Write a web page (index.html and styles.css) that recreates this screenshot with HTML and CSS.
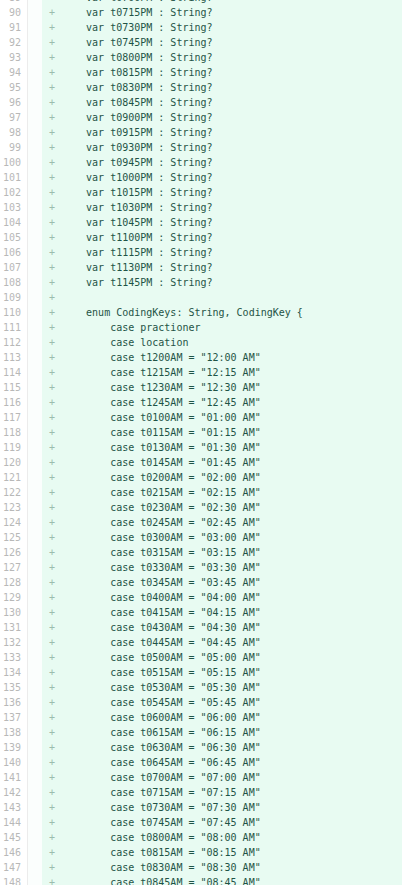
FILE: index.html
```html
<!DOCTYPE html>
<html>
<head>
<meta charset="utf-8">
<link rel="stylesheet" href="styles.css">
</head>
<body>
<div class="diff">
<div class="row"><span class="num">89</span><span class="gap"></span><span class="code"><span class="plus">+</span><span class="src">    var t0700PM : String?</span></span></div>
<div class="row"><span class="num">90</span><span class="gap"></span><span class="code"><span class="plus">+</span><span class="src">    var t0715PM : String?</span></span></div>
<div class="row"><span class="num">91</span><span class="gap"></span><span class="code"><span class="plus">+</span><span class="src">    var t0730PM : String?</span></span></div>
<div class="row"><span class="num">92</span><span class="gap"></span><span class="code"><span class="plus">+</span><span class="src">    var t0745PM : String?</span></span></div>
<div class="row"><span class="num">93</span><span class="gap"></span><span class="code"><span class="plus">+</span><span class="src">    var t0800PM : String?</span></span></div>
<div class="row"><span class="num">94</span><span class="gap"></span><span class="code"><span class="plus">+</span><span class="src">    var t0815PM : String?</span></span></div>
<div class="row"><span class="num">95</span><span class="gap"></span><span class="code"><span class="plus">+</span><span class="src">    var t0830PM : String?</span></span></div>
<div class="row"><span class="num">96</span><span class="gap"></span><span class="code"><span class="plus">+</span><span class="src">    var t0845PM : String?</span></span></div>
<div class="row"><span class="num">97</span><span class="gap"></span><span class="code"><span class="plus">+</span><span class="src">    var t0900PM : String?</span></span></div>
<div class="row"><span class="num">98</span><span class="gap"></span><span class="code"><span class="plus">+</span><span class="src">    var t0915PM : String?</span></span></div>
<div class="row"><span class="num">99</span><span class="gap"></span><span class="code"><span class="plus">+</span><span class="src">    var t0930PM : String?</span></span></div>
<div class="row"><span class="num">100</span><span class="gap"></span><span class="code"><span class="plus">+</span><span class="src">    var t0945PM : String?</span></span></div>
<div class="row"><span class="num">101</span><span class="gap"></span><span class="code"><span class="plus">+</span><span class="src">    var t1000PM : String?</span></span></div>
<div class="row"><span class="num">102</span><span class="gap"></span><span class="code"><span class="plus">+</span><span class="src">    var t1015PM : String?</span></span></div>
<div class="row"><span class="num">103</span><span class="gap"></span><span class="code"><span class="plus">+</span><span class="src">    var t1030PM : String?</span></span></div>
<div class="row"><span class="num">104</span><span class="gap"></span><span class="code"><span class="plus">+</span><span class="src">    var t1045PM : String?</span></span></div>
<div class="row"><span class="num">105</span><span class="gap"></span><span class="code"><span class="plus">+</span><span class="src">    var t1100PM : String?</span></span></div>
<div class="row"><span class="num">106</span><span class="gap"></span><span class="code"><span class="plus">+</span><span class="src">    var t1115PM : String?</span></span></div>
<div class="row"><span class="num">107</span><span class="gap"></span><span class="code"><span class="plus">+</span><span class="src">    var t1130PM : String?</span></span></div>
<div class="row"><span class="num">108</span><span class="gap"></span><span class="code"><span class="plus">+</span><span class="src">    var t1145PM : String?</span></span></div>
<div class="row"><span class="num">109</span><span class="gap"></span><span class="code"><span class="plus">+</span><span class="src"></span></span></div>
<div class="row"><span class="num">110</span><span class="gap"></span><span class="code"><span class="plus">+</span><span class="src">    enum CodingKeys: String, CodingKey {</span></span></div>
<div class="row"><span class="num">111</span><span class="gap"></span><span class="code"><span class="plus">+</span><span class="src">        case practioner</span></span></div>
<div class="row"><span class="num">112</span><span class="gap"></span><span class="code"><span class="plus">+</span><span class="src">        case location</span></span></div>
<div class="row"><span class="num">113</span><span class="gap"></span><span class="code"><span class="plus">+</span><span class="src">        case t1200AM = "12:00 AM"</span></span></div>
<div class="row"><span class="num">114</span><span class="gap"></span><span class="code"><span class="plus">+</span><span class="src">        case t1215AM = "12:15 AM"</span></span></div>
<div class="row"><span class="num">115</span><span class="gap"></span><span class="code"><span class="plus">+</span><span class="src">        case t1230AM = "12:30 AM"</span></span></div>
<div class="row"><span class="num">116</span><span class="gap"></span><span class="code"><span class="plus">+</span><span class="src">        case t1245AM = "12:45 AM"</span></span></div>
<div class="row"><span class="num">117</span><span class="gap"></span><span class="code"><span class="plus">+</span><span class="src">        case t0100AM = "01:00 AM"</span></span></div>
<div class="row"><span class="num">118</span><span class="gap"></span><span class="code"><span class="plus">+</span><span class="src">        case t0115AM = "01:15 AM"</span></span></div>
<div class="row"><span class="num">119</span><span class="gap"></span><span class="code"><span class="plus">+</span><span class="src">        case t0130AM = "01:30 AM"</span></span></div>
<div class="row"><span class="num">120</span><span class="gap"></span><span class="code"><span class="plus">+</span><span class="src">        case t0145AM = "01:45 AM"</span></span></div>
<div class="row"><span class="num">121</span><span class="gap"></span><span class="code"><span class="plus">+</span><span class="src">        case t0200AM = "02:00 AM"</span></span></div>
<div class="row"><span class="num">122</span><span class="gap"></span><span class="code"><span class="plus">+</span><span class="src">        case t0215AM = "02:15 AM"</span></span></div>
<div class="row"><span class="num">123</span><span class="gap"></span><span class="code"><span class="plus">+</span><span class="src">        case t0230AM = "02:30 AM"</span></span></div>
<div class="row"><span class="num">124</span><span class="gap"></span><span class="code"><span class="plus">+</span><span class="src">        case t0245AM = "02:45 AM"</span></span></div>
<div class="row"><span class="num">125</span><span class="gap"></span><span class="code"><span class="plus">+</span><span class="src">        case t0300AM = "03:00 AM"</span></span></div>
<div class="row"><span class="num">126</span><span class="gap"></span><span class="code"><span class="plus">+</span><span class="src">        case t0315AM = "03:15 AM"</span></span></div>
<div class="row"><span class="num">127</span><span class="gap"></span><span class="code"><span class="plus">+</span><span class="src">        case t0330AM = "03:30 AM"</span></span></div>
<div class="row"><span class="num">128</span><span class="gap"></span><span class="code"><span class="plus">+</span><span class="src">        case t0345AM = "03:45 AM"</span></span></div>
<div class="row"><span class="num">129</span><span class="gap"></span><span class="code"><span class="plus">+</span><span class="src">        case t0400AM = "04:00 AM"</span></span></div>
<div class="row"><span class="num">130</span><span class="gap"></span><span class="code"><span class="plus">+</span><span class="src">        case t0415AM = "04:15 AM"</span></span></div>
<div class="row"><span class="num">131</span><span class="gap"></span><span class="code"><span class="plus">+</span><span class="src">        case t0430AM = "04:30 AM"</span></span></div>
<div class="row"><span class="num">132</span><span class="gap"></span><span class="code"><span class="plus">+</span><span class="src">        case t0445AM = "04:45 AM"</span></span></div>
<div class="row"><span class="num">133</span><span class="gap"></span><span class="code"><span class="plus">+</span><span class="src">        case t0500AM = "05:00 AM"</span></span></div>
<div class="row"><span class="num">134</span><span class="gap"></span><span class="code"><span class="plus">+</span><span class="src">        case t0515AM = "05:15 AM"</span></span></div>
<div class="row"><span class="num">135</span><span class="gap"></span><span class="code"><span class="plus">+</span><span class="src">        case t0530AM = "05:30 AM"</span></span></div>
<div class="row"><span class="num">136</span><span class="gap"></span><span class="code"><span class="plus">+</span><span class="src">        case t0545AM = "05:45 AM"</span></span></div>
<div class="row"><span class="num">137</span><span class="gap"></span><span class="code"><span class="plus">+</span><span class="src">        case t0600AM = "06:00 AM"</span></span></div>
<div class="row"><span class="num">138</span><span class="gap"></span><span class="code"><span class="plus">+</span><span class="src">        case t0615AM = "06:15 AM"</span></span></div>
<div class="row"><span class="num">139</span><span class="gap"></span><span class="code"><span class="plus">+</span><span class="src">        case t0630AM = "06:30 AM"</span></span></div>
<div class="row"><span class="num">140</span><span class="gap"></span><span class="code"><span class="plus">+</span><span class="src">        case t0645AM = "06:45 AM"</span></span></div>
<div class="row"><span class="num">141</span><span class="gap"></span><span class="code"><span class="plus">+</span><span class="src">        case t0700AM = "07:00 AM"</span></span></div>
<div class="row"><span class="num">142</span><span class="gap"></span><span class="code"><span class="plus">+</span><span class="src">        case t0715AM = "07:15 AM"</span></span></div>
<div class="row"><span class="num">143</span><span class="gap"></span><span class="code"><span class="plus">+</span><span class="src">        case t0730AM = "07:30 AM"</span></span></div>
<div class="row"><span class="num">144</span><span class="gap"></span><span class="code"><span class="plus">+</span><span class="src">        case t0745AM = "07:45 AM"</span></span></div>
<div class="row"><span class="num">145</span><span class="gap"></span><span class="code"><span class="plus">+</span><span class="src">        case t0800AM = "08:00 AM"</span></span></div>
<div class="row"><span class="num">146</span><span class="gap"></span><span class="code"><span class="plus">+</span><span class="src">        case t0815AM = "08:15 AM"</span></span></div>
<div class="row"><span class="num">147</span><span class="gap"></span><span class="code"><span class="plus">+</span><span class="src">        case t0830AM = "08:30 AM"</span></span></div>
<div class="row"><span class="num">148</span><span class="gap"></span><span class="code"><span class="plus">+</span><span class="src">        case t0845AM = "08:45 AM"</span></span></div>
<div class="row"><span class="num">149</span><span class="gap"></span><span class="code"><span class="plus">+</span><span class="src">        case t0900AM = "09:00 AM"</span></span></div>
</div>
</body>
</html>
```

FILE: styles.css
```css
html, body {
  margin: 0;
  padding: 0;
  background: #ffffff;
  overflow: hidden;
}

.diff {
  margin-top: -10px;
  font-family: "DejaVu Sans Mono", "Liberation Mono", monospace;
  font-size: 10px;
  line-height: 15px;
}

.row {
  display: flex;
  height: 15px;
}

.num {
  width: 21px;
  padding-right: 6px;
  text-align: right;
  color: #b8b8b8;
  border-right: 1px solid #ececec;
  flex: none;
}

.gap {
  width: 14px;
  flex: none;
  background: #fbfefd;
}

.code {
  flex: 1;
  display: flex;
  background: #e8fbf2;
  color: #1f5446;
  white-space: pre;
}

.plus {
  width: 13px;
  padding-left: 7px;
  color: #9cbcae;
  flex: none;
}

.src {
  white-space: pre;
}
```
